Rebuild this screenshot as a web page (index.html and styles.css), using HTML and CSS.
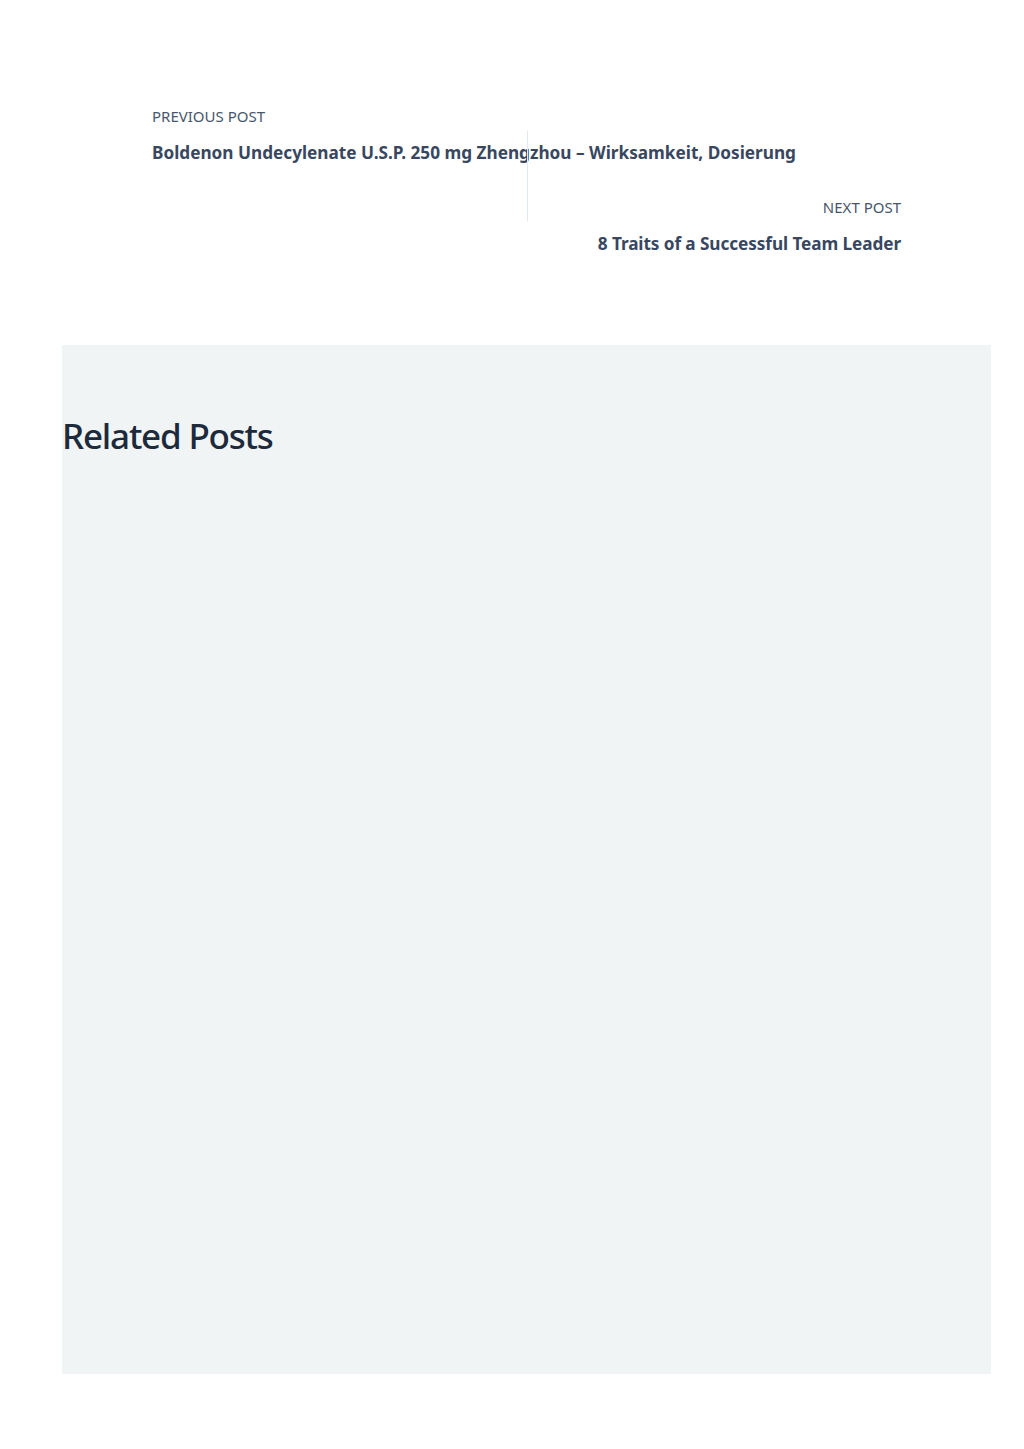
FILE: index.html
```html
<!doctype html>
<html lang="en">

<head>
  <meta charset="UTF-8">
  <title>Related Posts</title>
  <link rel="stylesheet" href="styles.css">
</head>

<body>
  <nav id="post_navigation">
    <div class="nav-previous">
      <a href="#">
        <span class="nav-label">Previous Post</span>
        <span class="nav-title">Boldenon Undecylenate U.S.P. 250 mg Zhengzhou – Wirksamkeit, Dosierung</span>
      </a>
    </div>
    <div class="nav-divider"></div>
    <div class="nav-next">
      <a href="#">
        <span class="nav-label">Next Post</span>
        <span class="nav-title">8 Traits of a Successful Team Leader</span>
      </a>
    </div>
  </nav>

  <section id="related_posts">
    <h2>Related Posts</h2>
  </section>
</body>
</html>
```

FILE: styles.css
```css
* {
  box-sizing: border-box;
  padding: 0;
  margin: 0;
}

body {
  font-family: "Noto Sans", "Open Sans", sans-serif;
  background-color: white;
  color: rgb(51, 65, 85);
}

a {
  color: inherit;
  text-decoration: none;
}

nav#post_navigation {
  display: grid;
  grid-template-columns: 375px 374px;
  margin: 0 0 0 152px;
  padding-top: 104px;
}

  nav#post_navigation .nav-label,
  nav#post_navigation .nav-title {
    display: block;
    white-space: nowrap;
  }

  nav#post_navigation .nav-label {
    font-size: 15px;
    line-height: 24px;
    text-transform: uppercase;
    color: rgb(72, 86, 108);
  }

  nav#post_navigation .nav-title {
    font-size: 17.2px;
    font-weight: bold;
    line-height: 26px;
    margin-top: 12px;
    color: rgb(56, 71, 95);
  }

  nav#post_navigation .nav-next .nav-title {
    letter-spacing: -0.08px;
  }

  nav#post_navigation .nav-previous {
    grid-column: 1;
    grid-row: 1;
  }

  nav#post_navigation .nav-divider {
    grid-column: 2;
    grid-row: 1 / 3;
    align-self: start;
    margin-top: 27px;
    height: 90px;
    border-left: 1px solid rgb(226, 232, 240);
  }

  nav#post_navigation .nav-next {
    grid-column: 2;
    grid-row: 2;
    text-align: right;
    padding-top: 29px;
  }

section#related_posts {
  margin: 88px 33px 75px 62px;
  height: 1029px;
  background-color: rgb(240, 244, 245);
  padding-top: 67px;
}

  section#related_posts h2 {
    font-size: 35px;
    font-weight: 500;
    letter-spacing: -1.2px;
    line-height: 48px;
    color: rgb(29, 42, 59);
  }
```
